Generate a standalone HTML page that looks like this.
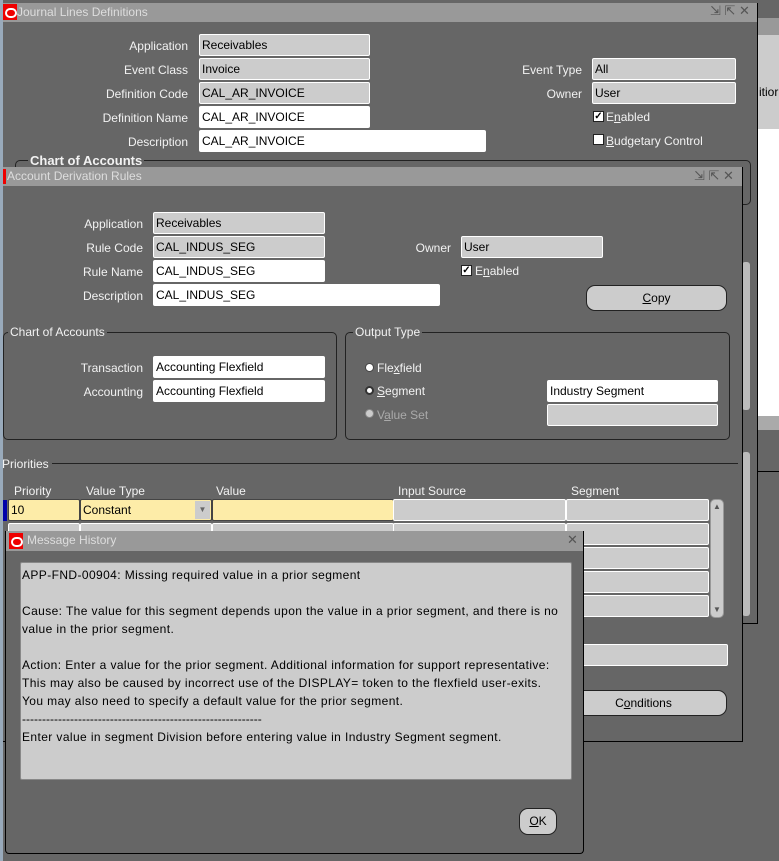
<!DOCTYPE html>
<html><head><meta charset="utf-8"><style>
*{box-sizing:border-box;margin:0;padding:0}
body{width:779px;height:861px;background:#666;position:relative;overflow:hidden;font-family:"Liberation Sans",sans-serif;font-size:12px;color:#000}
.a{position:absolute}
.lbl{position:absolute;color:#f2f2f2;text-align:right;white-space:nowrap;line-height:23px}
.f{position:absolute;background:#ccc;border:1px solid #fff;border-radius:2px;height:22px;line-height:21px;padding-left:2px;white-space:nowrap;overflow:hidden}
.w{background:#fff}
.y{background:#fdeca8;border-color:#444}
.tb{position:absolute;background:#999;color:#ddd;font-size:12px;line-height:19px;padding-left:4px}
.logo{position:absolute;width:14px;height:16px;background:#e00;}
.logo:after{content:"";position:absolute;left:2px;top:4px;width:8px;height:6px;border:2px solid #fff;border-radius:5px}
.ctl{position:absolute;color:#555;font-size:13px;top:1px}
.win{position:absolute;background:#666;border-right:1px solid #000;border-bottom:1px solid #000}
.grp{position:absolute;border:1px solid #222;border-radius:5px}
.gl{position:absolute;background:#666;color:#f2f2f2;padding:0 2px;line-height:14px}
.cb{position:absolute;width:11px;height:11px;background:#fff;border:1px solid #222;font-size:10px;line-height:9px;text-align:center;font-weight:bold}
.rd{position:absolute;width:9px;height:9px;border-radius:50%;background:#fff;border:1px solid #444}
.btn{position:absolute;background:#ccc;border:1px solid #222;border-radius:9px;text-align:center;line-height:24px}
.hd{position:absolute;color:#f2f2f2;top:484px}
u{text-decoration:underline}
</style></head><body>
<div class="a" style="left:757px;top:18px;width:22px;height:17px;background:#999"></div>
<div class="a" style="left:757px;top:35px;width:22px;height:94px;background:#ccc"></div>
<div class="a" style="left:759px;top:85px;font-size:12px">itior</div>
<div class="a" style="left:757px;top:129px;width:22px;height:287px;background:#fff"></div>
<div class="a" style="left:757px;top:416px;width:22px;height:14px;background:#aaa"></div>
<div class="a" style="left:757px;top:471px;width:22px;height:1px;background:#000"></div>
<div class="a" style="left:0;top:0;width:3px;height:861px;background:#9ab"></div>

<div class="win" style="left:3px;top:3px;width:755px;height:621px"></div>
<div class="tb" style="left:3px;top:3px;width:754px;height:19px;padding-left:14px">Journal Lines Definitions</div>
<div class="logo" style="left:3px;top:4px"></div>
<div class="ctl" style="left:710px;top:3px;color:#555">⇲ ⇱ ✕</div>
<div class="lbl" style="left:80px;width:108px;top:35px">Application</div>
<div class="f" style="left:199px;top:34px;width:171px">Receivables</div>
<div class="lbl" style="left:80px;width:108px;top:59px">Event Class</div>
<div class="f" style="left:199px;top:58px;width:171px">Invoice</div>
<div class="lbl" style="left:60px;width:128px;top:83px">Definition Code</div>
<div class="f" style="left:199px;top:82px;width:171px">CAL_AR_INVOICE</div>
<div class="lbl" style="left:60px;width:128px;top:107px">Definition Name</div>
<div class="f w" style="left:199px;top:106px;width:171px">CAL_AR_INVOICE</div>
<div class="lbl" style="left:60px;width:128px;top:131px">Description</div>
<div class="f w" style="left:199px;top:130px;width:287px">CAL_AR_INVOICE</div>
<div class="lbl" style="left:480px;width:102px;top:59px">Event Type</div>
<div class="f" style="left:592px;top:58px;width:144px">All</div>
<div class="lbl" style="left:480px;width:102px;top:83px">Owner</div>
<div class="f" style="left:592px;top:82px;width:144px">User</div>
<div class="cb" style="left:593px;top:111px">✓</div><div class="lbl" style="left:606px;top:106px">E<u>n</u>abled</div>
<div class="cb" style="left:593px;top:134px"></div><div class="lbl" style="left:606px;top:130px"><u>B</u>udgetary Control</div>
<div class="grp" style="left:15px;top:160px;width:736px;height:45px"></div>
<div class="gl" style="left:28px;top:154px;font-weight:bold;font-size:13px">Chart of Accounts</div>
<div class="a" style="left:742px;top:262px;width:8px;height:148px;background:#bbb;border-radius:3px"></div>
<div class="a" style="left:742px;top:452px;width:8px;height:164px;background:#bbb;border-radius:3px"></div>

<div class="win" style="left:3px;top:167px;width:740px;height:575px"></div>
<div class="tb" style="left:3px;top:167px;width:739px;height:19px">Account Derivation Rules</div>
<div class="a" style="left:3px;top:169px;width:3px;height:15px;background:#e00"></div>
<div class="ctl" style="left:694px;top:168px">⇲ ⇱ ✕</div>
<div class="lbl" style="left:40px;width:103px;top:213px">Application</div>
<div class="f" style="left:153px;top:212px;width:172px">Receivables</div>
<div class="lbl" style="left:40px;width:103px;top:237px">Rule Code</div>
<div class="f" style="left:153px;top:236px;width:172px">CAL_INDUS_SEG</div>
<div class="lbl" style="left:40px;width:103px;top:261px">Rule Name</div>
<div class="f w" style="left:153px;top:260px;width:172px">CAL_INDUS_SEG</div>
<div class="lbl" style="left:40px;width:103px;top:285px">Description</div>
<div class="f w" style="left:153px;top:284px;width:287px">CAL_INDUS_SEG</div>
<div class="lbl" style="left:380px;width:71px;top:237px">Owner</div>
<div class="f" style="left:461px;top:236px;width:142px">User</div>
<div class="cb" style="left:461px;top:265px">✓</div><div class="lbl" style="left:475px;top:260px">E<u>n</u>abled</div>
<div class="btn" style="left:586px;top:285px;width:141px;height:26px"><u>C</u>opy</div>

<div class="grp" style="left:3px;top:332px;width:334px;height:108px"></div>
<div class="gl" style="left:8px;top:325px">Chart of Accounts</div>
<div class="lbl" style="left:40px;width:103px;top:357px">Transaction</div>
<div class="f w" style="left:153px;top:356px;width:172px">Accounting Flexfield</div>
<div class="lbl" style="left:40px;width:103px;top:381px">Accounting</div>
<div class="f w" style="left:153px;top:380px;width:172px">Accounting Flexfield</div>

<div class="grp" style="left:345px;top:332px;width:385px;height:108px"></div>
<div class="gl" style="left:353px;top:325px">Output Type</div>
<div class="rd" style="left:365px;top:363px"></div><div class="lbl" style="left:377px;top:357px">Fle<u>x</u>field</div>
<div class="rd" style="left:365px;top:386px;border:2px solid #333"></div><div class="lbl" style="left:377px;top:380px"><u>S</u>egment</div>
<div class="rd" style="left:365px;top:409px;background:#ccc;border-color:#888"></div><div class="lbl" style="left:377px;top:404px;color:#aaa">V<u>a</u>lue Set</div>
<div class="f w" style="left:547px;top:380px;width:171px">Industry Segment</div>
<div class="f" style="left:547px;top:404px;width:171px"></div>

<div class="lbl" style="left:2px;top:453px">Priorities</div>
<div class="a" style="left:52px;top:463px;width:686px;height:1px;background:#222"></div>
<div class="hd" style="left:14px">Priority</div>
<div class="hd" style="left:86px">Value Type</div>
<div class="hd" style="left:216px">Value</div>
<div class="hd" style="left:398px">Input Source</div>
<div class="hd" style="left:571px">Segment</div>
<div class="a" style="left:3px;top:500px;width:4px;height:21px;background:#00a"></div>
<div class="f y" style="left:8px;top:499px;width:72px">10</div>
<div class="f y" style="left:80px;top:499px;width:132px">Constant</div>
<div class="a" style="left:195px;top:501px;width:15px;height:18px;background:#ccc;color:#666;font-size:8px;text-align:center;line-height:18px">▼</div>
<div class="f y" style="left:212px;top:499px;width:182px"></div>
<div class="f" style="left:393px;top:499px;width:173px"></div>
<div class="f" style="left:566px;top:499px;width:143px"></div>
<div class="f" style="left:8px;top:523px;width:72px"></div><div class="f" style="left:80px;top:523px;width:132px"></div><div class="f" style="left:212px;top:523px;width:182px"></div><div class="f" style="left:393px;top:523px;width:173px"></div><div class="f" style="left:566px;top:523px;width:143px"></div>
<div class="f" style="left:566px;top:547px;width:143px"></div>
<div class="f" style="left:566px;top:571px;width:143px"></div>
<div class="f" style="left:566px;top:595px;width:143px"></div>
<div class="a" style="left:710px;top:499px;width:14px;height:119px;background:#ccc;border:1px solid #999;border-radius:5px;font-size:8px;color:#555;text-align:center;line-height:14px">▲<div style="position:absolute;bottom:0;width:12px">▼</div></div>
<div class="f" style="left:560px;top:644px;width:168px"></div>
<div class="btn" style="left:560px;top:690px;width:167px;height:26px">C<u>o</u>nditions</div>

<div class="a" style="left:5px;top:531px;width:579px;height:323px;background:#666;border:1px solid #000;border-top:0;border-radius:0 0 4px 4px"></div>
<div class="tb" style="left:6px;top:531px;width:577px;height:20px;padding-left:21px">Message History</div>
<div class="logo" style="left:9px;top:533px"></div>
<div class="ctl" style="left:567px;top:532px">✕</div>
<div class="a" style="left:20px;top:562px;width:552px;height:218px;background:#ccc;border:1px solid #888;border-radius:2px;padding:3px 1px;line-height:18px;font-size:12px;letter-spacing:0.4px">APP-FND-00904: Missing required value in a prior segment<br><br>Cause: The value for this segment depends upon the value in a prior segment, and there is no<br>value in the prior segment.<br><br>Action: Enter a value for the prior segment. Additional information for support representative:<br>This may also be caused by incorrect use of the DISPLAY= token to the flexfield user-exits.<br>You may also need to specify a default value for the prior segment.<br><span style="letter-spacing:0">------------------------------------------------------------</span><br>Enter value in segment Division before entering value in Industry Segment segment.</div>
<div class="btn" style="left:519px;top:808px;width:38px;height:27px"><u>O</u>K</div>
</body></html>
